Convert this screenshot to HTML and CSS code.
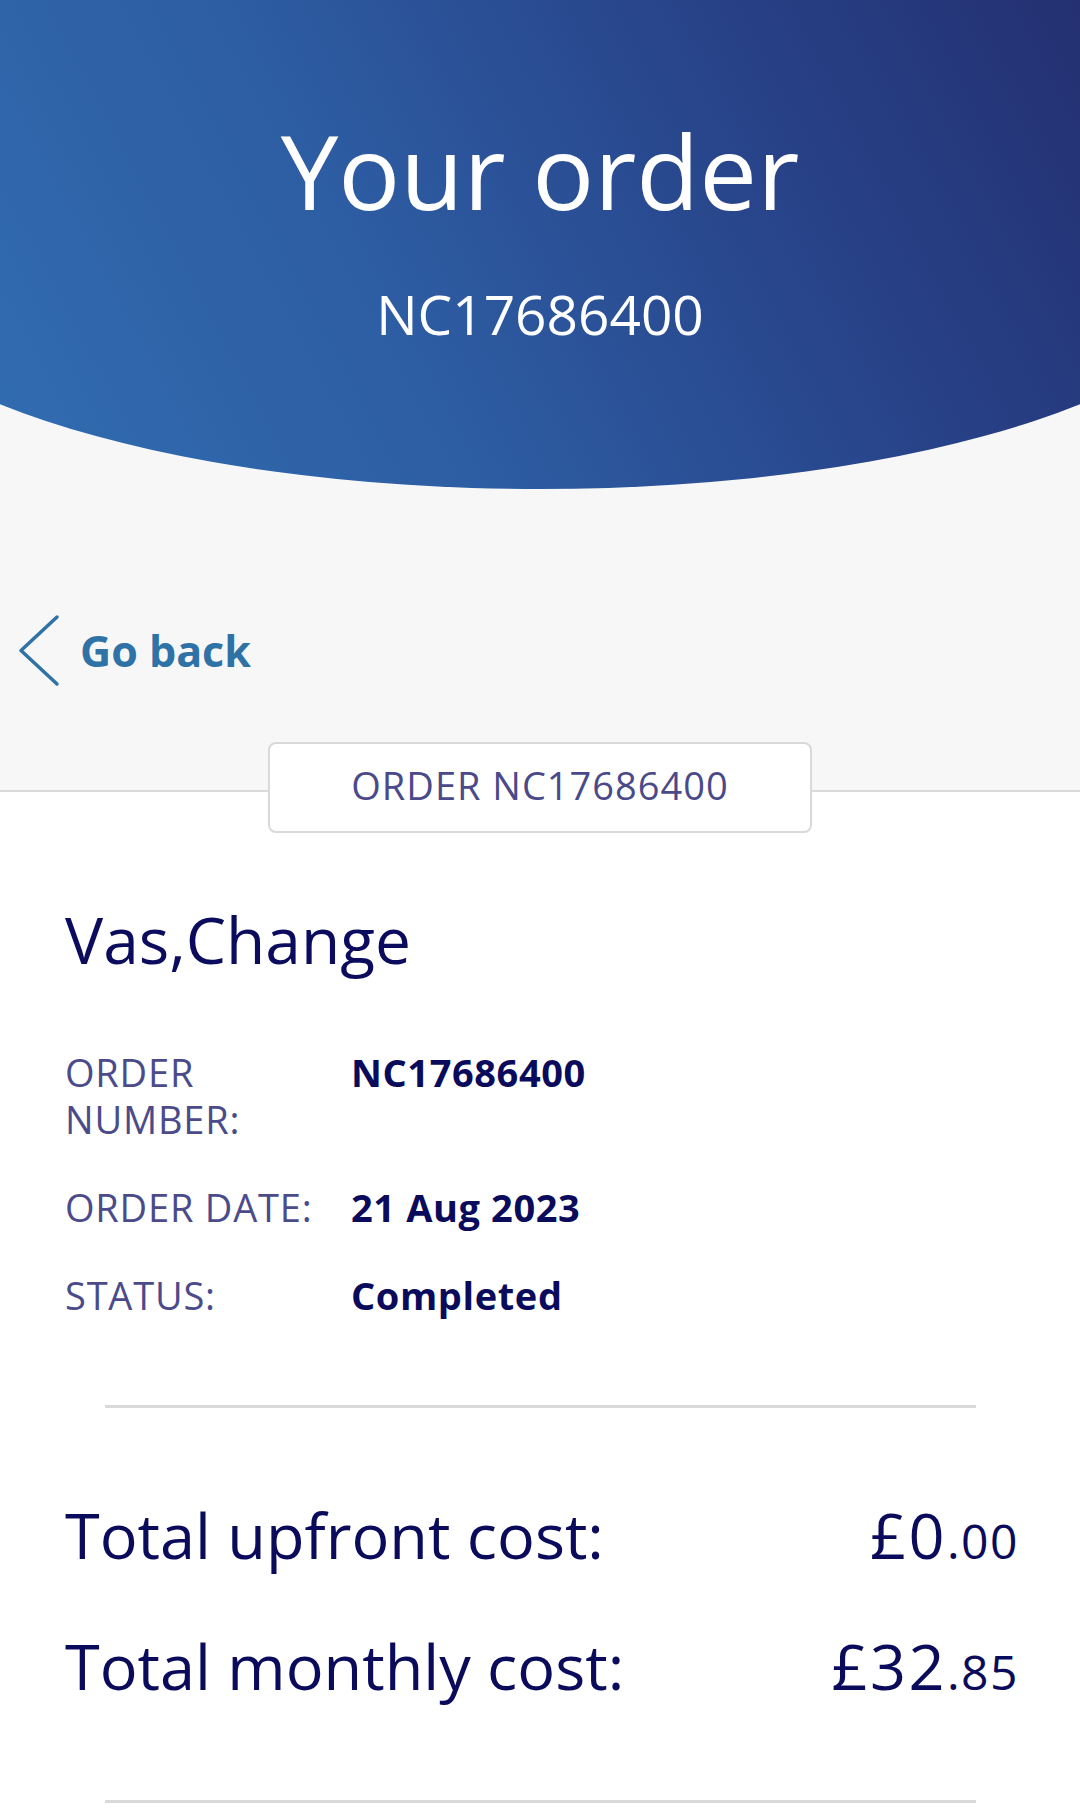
FILE: index.html
```html
<!DOCTYPE html>
<html lang="en">
<head>
    <meta charset="UTF-8">
    <meta name="viewport" content="width=device-width, initial-scale=1.0">
    <title>Your order</title>
    <link rel="stylesheet" href="styles.css">
</head>
<body>
<div class="page">
    <div class="top">
        <div class="hero">
            <h1 class="hero-title">Your order</h1>
            <div class="hero-number">NC17686400</div>
        </div>
        <a class="back" href="#">
            <svg class="back-icon" width="42" height="73" viewBox="0 0 42 73">
                <polyline points="39,3 3,36.5 39,70" fill="none" stroke="#2f72a6" stroke-width="3.5" stroke-linecap="round" stroke-linejoin="round"/>
            </svg>
            <span>Go back</span>
        </a>
    </div>

    <div class="tab">ORDER NC17686400</div>

    <div class="content">
        <h2 class="name">Vas,Change</h2>

        <div class="details">
            <div class="label">ORDER NUMBER:</div>
            <div class="value">NC17686400</div>
            <div class="label">ORDER DATE:</div>
            <div class="value">21 Aug 2023</div>
            <div class="label">STATUS:</div>
            <div class="value">Completed</div>
        </div>
    </div>

    <hr class="sep">

    <div class="totals">
        <div class="total-row first">
            <span>Total upfront cost:</span>
            <span class="price">£0<small>.00</small></span>
        </div>
        <div class="total-row">
            <span>Total monthly cost:</span>
            <span class="price">£32<small>.85</small></span>
        </div>
    </div>

    <hr class="sep last">
</div>
</body>
</html>
```

FILE: styles.css
```css
* {
    margin: 0;
    padding: 0;
    box-sizing: border-box;
}
body {
    background: #fff;
    font-family: "Open Sans", "Noto Sans", sans-serif;
    color: #0b0b5c;
}
.page {
    width: 1080px;
    overflow: hidden;
}

/* grey top area with the curved banner */
.top {
    background: #f7f7f7;
    border-bottom: 2px solid #dadada;
    padding-bottom: 103px;
}
.hero {
    width: 1400px;
    height: 489px;
    margin-left: -160px;
    padding-top: 109px;
    text-align: center;
    color: #fff;
    background: linear-gradient(62deg, #3372b5 0%, #2d5ca2 40%, #28448a 65%, #222868 100%);
    border-radius: 0 0 700px 700px / 0 0 233px 233px;
}
.hero-title {
    font-size: 103px;
    font-weight: 400;
    line-height: 1.2;
}
.hero-number {
    margin-top: 48px;
    font-size: 55px;
    font-weight: 400;
    line-height: 1.2;
}

.back {
    display: flex;
    align-items: center;
    gap: 20px;
    margin-top: 125px;
    padding-left: 18px;
    color: #2f72a6;
    font-size: 43px;
    font-weight: 700;
    line-height: 1;
    text-decoration: none;
}
.back-icon {
    display: block;
}

.tab {
    width: 544px;
    height: 91px;
    margin: -50px auto 0;
    background: #fff;
    border: 2px solid #d9d9d9;
    border-radius: 8px;
    text-align: center;
    font-size: 38px;
    line-height: 83px;
    letter-spacing: 1px;
    color: #4a4a8a;
}

.content {
    padding: 0 64px 0 65px;
}
.name {
    margin-top: 69px;
    font-size: 64px;
    font-weight: 400;
    line-height: 1.2;
    color: #0c0c5e;
}
.details {
    display: grid;
    grid-template-columns: 262px auto;
    column-gap: 24px;
    row-gap: 41px;
    margin-top: 70px;
    font-size: 38px;
    line-height: 47px;
}
.label {
    color: #4b4b8b;
    letter-spacing: 0.8px;
}
.value {
    font-weight: 700;
    letter-spacing: 0.6px;
    color: #0b0b5c;
}

.sep {
    margin: 86px 104px 0 105px;
    border: none;
    height: 3px;
    background: #dadada;
}
.sep.last {
    margin-top: 96px;
}

.totals {
    padding: 0 61px 0 65px;
}
.total-row {
    display: flex;
    justify-content: space-between;
    align-items: baseline;
    margin-top: 56px;
    font-size: 63px;
    line-height: 1.2;
    color: #0b0b5c;
}
.total-row.first {
    margin-top: 89px;
}
.price {
    letter-spacing: 2.5px;
}
.price small {
    font-size: 48px;
    letter-spacing: 1.5px;
}
```
